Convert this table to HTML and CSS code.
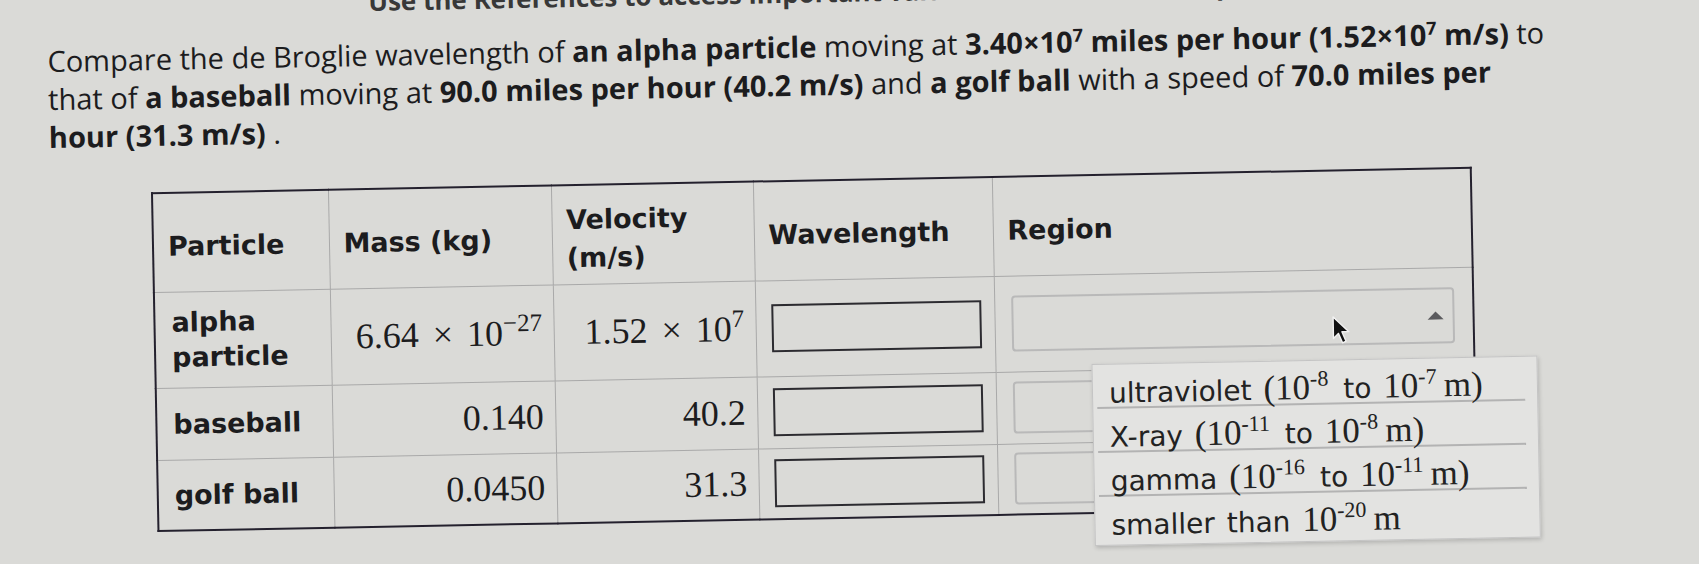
FILE: index.html
```html
<!DOCTYPE html>
<html lang="en">
<head>
<meta charset="utf-8">
<title>de Broglie wavelength</title>
<link rel="stylesheet" href="styles.css">
</head>
<body>
<div class="sheet">
  <div class="refs">Use the References to access important values if needed for this question.</div>
  <p class="prompt">Compare the de Broglie wavelength of <b>an alpha particle</b> moving at <b>3.40×10<sup>7</sup> miles per hour (1.52×10<sup>7</sup> m/s)</b> to that of <b>a baseball</b> moving at <b>90.0 miles per hour (40.2 m/s)</b> and <b>a golf ball</b> with a speed of <b>70.0 miles per hour (31.3 m/s)</b> .</p>

  <div class="tablewrap">
    <table class="data">
      <colgroup>
        <col class="c-name">
        <col class="c-mass">
        <col class="c-vel">
        <col class="c-wave">
        <col class="c-region">
      </colgroup>
      <thead>
        <tr class="r-head">
          <th>Particle</th>
          <th>Mass (kg)</th>
          <th>Velocity (m/s)</th>
          <th>Wavelength</th>
          <th>Region</th>
        </tr>
      </thead>
      <tbody>
        <tr class="r-alpha">
          <td class="name">alpha particle</td>
          <td class="num">6.64<span class="times">×</span>10<sup>−27</sup></td>
          <td class="num">1.52<span class="times">×</span>10<sup>7</sup></td>
          <td class="wave"><div class="answer"></div></td>
          <td class="region"><div class="picker open"><span class="caret"></span></div></td>
        </tr>
        <tr class="r-base">
          <td class="name">baseball</td>
          <td class="num">0.140</td>
          <td class="num">40.2</td>
          <td class="wave"><div class="answer"></div></td>
          <td class="region"><div class="picker"></div></td>
        </tr>
        <tr class="r-golf">
          <td class="name">golf ball</td>
          <td class="num">0.0450</td>
          <td class="num">31.3</td>
          <td class="wave"><div class="answer"></div></td>
          <td class="region"><div class="picker"></div></td>
        </tr>
      </tbody>
    </table>

    <ul class="dropdown">
      <li>ultraviolet <span class="m">(10</span><sup>-8</sup> to <span class="m">10</span><sup>-7</sup><span class="m unit">m)</span></li>
      <li>X-ray <span class="m">(10</span><sup>-11</sup> to <span class="m">10</span><sup>-8</sup><span class="m unit">m)</span></li>
      <li>gamma <span class="m">(10</span><sup>-16</sup> to <span class="m">10</span><sup>-11</sup><span class="m unit">m)</span></li>
      <li>smaller than <span class="m">10</span><sup>-20</sup><span class="m unit">m</span></li>
    </ul>

    <svg class="cursor" width="20" height="30" viewBox="0 0 20 30" aria-hidden="true">
      <path d="M1.5 1.5 L1.5 23 L6.5 18 L10.5 27.5 L14 26 L10 16.5 L17 16.5 Z" fill="#111" stroke="#f2f2f2" stroke-width="1.4" stroke-linejoin="round"/>
    </svg>
  </div>
</div>
</body>
</html>
```

FILE: styles.css
```css
html, body {
  margin: 0;
  padding: 0;
}

body {
  width: 1699px;
  height: 564px;
  overflow: hidden;
  background: #dadad7;
  color: #1c1c1e;
}

.sheet {
  transform: rotate(-1.1deg);
  transform-origin: 160px 360px;
}

.refs {
  margin: -10px 0 0 375px;
  font: 700 26px/30px "Open Sans", sans-serif;
  color: #383838;
  white-space: nowrap;
}

.prompt {
  margin: 20px 0 0 53px;
  width: 1513px;
  font: 400 29px/38px "Open Sans", sans-serif;
}

.prompt b {
  font-weight: 700;
}

.prompt sup {
  font-size: 0.62em;
  line-height: 0;
  vertical-align: 0.6em;
}

.tablewrap {
  position: relative;
  margin: 38px 0 0 154px;
  width: 1319px;
}

.data {
  width: 1319px;
  border-collapse: collapse;
  table-layout: fixed;
  border: 2px solid #24212e;
}

.c-name { width: 176px; }
.c-mass { width: 223px; }
.c-vel { width: 202px; }
.c-wave { width: 239px; }
.c-region { width: 479px; }

.data th,
.data td {
  border: 1px solid #a9a9a9;
  padding: 0 12px 0 14px;
  vertical-align: middle;
}

.data th {
  font: 700 27px/38px "DejaVu Sans", Verdana, sans-serif;
  text-align: left;
  padding-top: 8px;
}

.r-head { height: 99px; }
.r-alpha { height: 96px; }
.r-base { height: 72px; }
.r-golf { height: 71px; }

.data td.name {
  font: 700 27px/35px "DejaVu Sans", Verdana, sans-serif;
  padding-left: 16px;
}

.data td.num {
  font: 36px/38px "Liberation Serif", "Times New Roman", serif;
  text-align: right;
  padding-right: 11px;
}

.times {
  margin: 0 14px;
}

.data td.num sup {
  font-size: 25px;
  line-height: 0;
  vertical-align: 14px;
}

.data td.wave {
  padding: 0 0 0 15px;
}

.answer {
  width: 210px;
  height: 48px;
  box-sizing: border-box;
  border: 2px solid #2c2b30;
}

.data td.region {
  padding: 0 18px 0 16px;
}

.picker {
  height: 52px;
  box-sizing: border-box;
  border: 2px solid #b9b9b9;
  border-radius: 4px;
  display: flex;
  align-items: center;
  justify-content: flex-end;
  padding-right: 9px;
}

.picker.open {
  height: 56px;
}

.caret {
  width: 0;
  height: 0;
  border-left: 8px solid transparent;
  border-right: 8px solid transparent;
  border-bottom: 8px solid #5b5b5e;
}

.dropdown {
  position: absolute;
  left: 937px;
  top: 190px;
  width: 446px;
  margin: 0;
  padding: 0 0 4px;
  list-style: none;
  background: #e3e3e1;
  border: 1px solid #c4c4c4;
  box-shadow: 1px 2px 4px rgba(0, 0, 0, 0.18);
  box-sizing: border-box;
}

.dropdown li {
  margin: 0 12px 0 4px;
  height: 44px;
  box-sizing: border-box;
  padding: 13px 0 0 12px;
  border-bottom: 2px solid #b3b3b3;
  font: 400 28px/27px "DejaVu Sans", Verdana, sans-serif;
  color: #222;
  word-spacing: 3px;
  white-space: nowrap;
}

.dropdown li:last-child {
  border-bottom: none;
}

.dropdown .m {
  font: 35px/27px "Liberation Serif", "Times New Roman", serif;
}

.dropdown .unit {
  margin-left: 4px;
}

.dropdown sup {
  font: 22px/0 "Liberation Serif", "Times New Roman", serif;
  vertical-align: 13px;
  margin-right: 3px;
}

.cursor {
  position: absolute;
  left: 1178px;
  top: 146px;
}
```
